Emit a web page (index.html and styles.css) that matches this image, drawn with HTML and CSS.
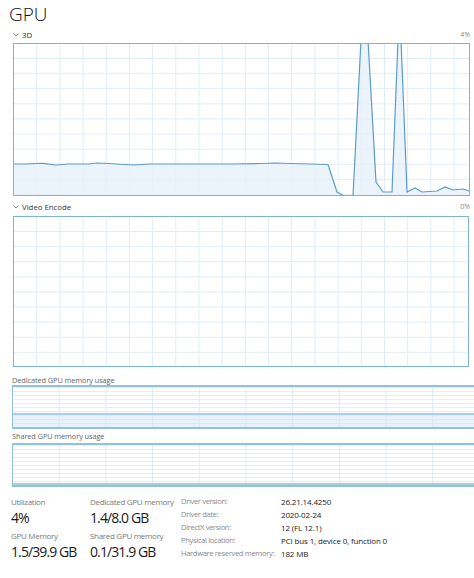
FILE: index.html
```html
<!DOCTYPE html>
<html lang="en">
<head>
  <meta charset="UTF-8">
  <title>GPU - Performance</title>
  <link rel="stylesheet" href="styles.css">
</head>
<body>
<div class="page">

  <h1 class="title">GPU</h1>

  <!-- 3D engine -->
  <div class="engine-head">
    <span class="engine-name">
      <svg class="chev" width="6" height="4" viewBox="0 0 6 4"><polyline points="0.5,0.5 3,3 5.5,0.5" /></svg>3D
    </span>
    <span class="engine-pct">4%</span>
  </div>
  <div class="graph graph-3d">
    <svg width="455" height="151" viewBox="0 0 455 151">
      <polygon class="area" points="0,120 11,120 23,119.5 29,119.3 42,121 54,120 74,120 83,119 94,119.5 119,121 136,120 159,120 189,120 219,120 246,119.5 261,119 276,119.5 296,120 314,120.5 323,148 330,152 339,152 347,-4 354,-4 362,138 369,148 378,148 384,-4 387,-4 393,148 401,144 408,148 423,147 431,143 439,146 449,145 455,147 455,152 0,152" />
      <polyline class="line" points="0,120 11,120 23,119.5 29,119.3 42,121 54,120 74,120 83,119 94,119.5 119,121 136,120 159,120 189,120 219,120 246,119.5 261,119 276,119.5 296,120 314,120.5 323,148 330,152 339,152 347,-4 354,-4 362,138 369,148 378,148 384,-4 387,-4 393,148 401,144 408,148 423,147 431,143 439,146 449,145 455,147" />
    </svg>
  </div>

  <!-- Video encode engine -->
  <div class="engine-head engine-head-next">
    <span class="engine-name">
      <svg class="chev" width="6" height="4" viewBox="0 0 6 4"><polyline points="0.5,0.5 3,3 5.5,0.5" /></svg>Video Encode
    </span>
    <span class="engine-pct">0%</span>
  </div>
  <div class="graph graph-encode"></div>

  <!-- Memory graphs -->
  <div class="mem-head">Dedicated GPU memory usage</div>
  <div class="mem-graph">
    <div class="mem-fill mem-fill-dedicated"></div>
  </div>

  <div class="mem-head mem-head-next">Shared GPU memory usage</div>
  <div class="mem-graph">
    <div class="mem-fill mem-fill-shared"></div>
  </div>

  <!-- Summary -->
  <div class="stats">
    <div class="stat-col">
      <div class="stat-label">Utilization</div>
      <div class="stat-value">4%</div>
      <div class="stat-label stat-label-next">GPU Memory</div>
      <div class="stat-value">1.5/39.9 GB</div>
    </div>
    <div class="stat-col stat-col-wide">
      <div class="stat-label">Dedicated GPU memory</div>
      <div class="stat-value">1.4/8.0 GB</div>
      <div class="stat-label stat-label-next">Shared GPU memory</div>
      <div class="stat-value">0.1/31.9 GB</div>
    </div>
    <div class="details">
      <span class="detail-key">Driver version:</span><span class="detail-val">26.21.14.4250</span>
      <span class="detail-key">Driver date:</span><span class="detail-val">2020-02-24</span>
      <span class="detail-key">DirectX version:</span><span class="detail-val">12 (FL 12.1)</span>
      <span class="detail-key">Physical location:</span><span class="detail-val">PCI bus 1, device 0, function 0</span>
      <span class="detail-key">Hardware reserved memory:</span><span class="detail-val">182 MB</span>
    </div>
  </div>

</div>
</body>
</html>
```

FILE: styles.css
```css
/* Task manager style GPU page */
* {
  box-sizing: border-box;
}

html, body {
  margin: 0;
  background: #fff;
}

body {
  font-family: "Open Sans", "Noto Sans", sans-serif;
  color: #1f1f1f;
}

.page {
  width: 474px;
  height: 578px;
  overflow: hidden;
}

.title {
  margin: 0;
  padding-left: 9px;
  font-size: 19px;
  font-weight: 300;
  line-height: 28px;
  color: #111;
}

/* Engine headers */
.engine-head {
  display: flex;
  justify-content: space-between;
  height: 15px;
  padding: 1px 4px 0 13px;
  font-size: 7.8px;
  line-height: 12px;
  white-space: nowrap;
}

.engine-head-next {
  height: 20px;
  padding-top: 5px;
}

.engine-name {
  color: #333;
}

.chev {
  margin-right: 3px;
  vertical-align: 1px;
}

.chev polyline {
  fill: none;
  stroke: #8a8a8a;
  stroke-width: 1;
}

.engine-pct {
  color: #8a8a8a;
  font-size: 7px;
}

/* Engine graphs */
.graph {
  margin-left: 13px;
  width: 457px;
  height: 153px;
  border: 1px solid #7db4d4;
  background-image:
    linear-gradient(to right, #dfecf5 1px, transparent 1px),
    linear-gradient(to bottom, #dfecf5 1px, transparent 1px);
  background-size: 23.2px 15.1px;
  background-position: -1px -1px;
}

.graph svg {
  display: block;
}

.graph-encode {
  width: 456px;
  height: 151px;
}

.area {
  fill: #e7f1fa;
  fill-opacity: 0.85;
}

.line {
  fill: none;
  stroke: #5c9ccb;
  stroke-width: 1.2;
}

/* Memory graphs */
.mem-head {
  height: 18px;
  padding: 7px 0 0 12px;
  font-size: 7.4px;
  line-height: 12px;
  letter-spacing: -0.1px;
  color: #666;
  white-space: nowrap;
}

.mem-head-next {
  height: 14px;
  padding-top: 1px;
}

.mem-graph {
  display: flex;
  flex-direction: column;
  justify-content: flex-end;
  margin-left: 12px;
  width: 470px;
  height: 44px;
  border-top: 2px solid #93c0da;
  border-bottom: 2px solid #93c0da;
  border-left: 1px solid #93c0da;
  background-image:
    linear-gradient(to right, #dde9f2 1px, transparent 1px),
    linear-gradient(to bottom, #e3eef6 1px, transparent 1px);
  background-size: 46.7px 4px;
  background-position: -1px 0;
}

.mem-fill {
  border-top: 2px solid #a9cde2;
  background: rgba(214, 232, 246, 0.55);
}

.mem-fill-dedicated {
  height: 14px;
}

.mem-fill-shared {
  height: 2px;
}

/* Summary */
.stats {
  display: flex;
  padding: 8px 0 0 11px;
  white-space: nowrap;
}

.stat-col {
  width: 79px;
}

.stat-col-wide {
  width: 91px;
}

.stat-label {
  font-size: 8px;
  line-height: 14px;
  color: #7a7a7a;
  letter-spacing: -0.3px;
}

.stat-label-next {
  margin-top: 2px;
}

.stat-value {
  font-size: 14px;
  line-height: 18px;
  letter-spacing: -0.9px;
  color: #1a1a1a;
}

.details {
  display: grid;
  grid-template-columns: 100px auto;
  padding-top: 1px;
  font-size: 8px;
  line-height: 11.75px;
  letter-spacing: -0.15px;
}

.detail-key {
  color: #8a8a8a;
  font-size: 7.6px;
  letter-spacing: -0.35px;
}

.detail-val {
  color: #222;
}
```
